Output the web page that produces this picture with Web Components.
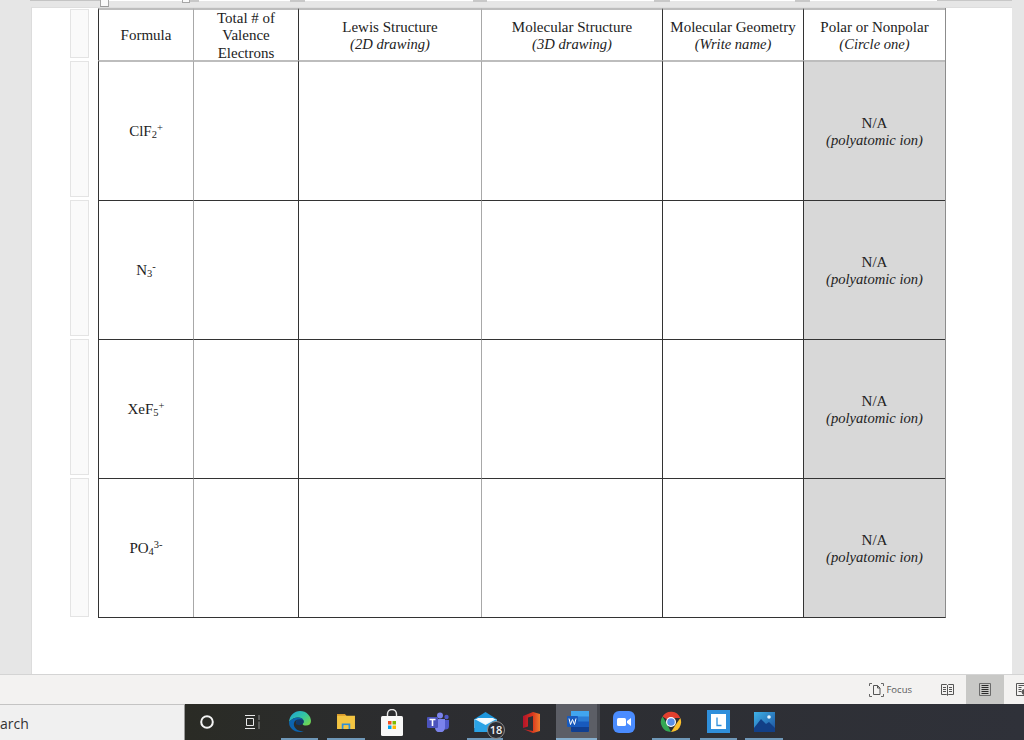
<!DOCTYPE html>
<html>
<head>
<meta charset="utf-8">
<title>Word document</title>
<style>
  html, body { margin: 0; height: 100%; overflow: hidden; }
  body { font-family: "Liberation Sans", sans-serif; }
  word-window { height: 740px; }
</style>
</head>
<body>
<word-window>
  <ruler-strip slot="ruler"></ruler-strip>
  <doc-page slot="page">
    <row-marks slot="marks"></row-marks>
    <chem-table slot="table"></chem-table>
  </doc-page>
  <status-bar slot="status"></status-bar>
  <task-bar slot="taskbar"></task-bar>
</word-window>

<script>
// Outer frame: grey workspace, status bar and taskbar stacked in a column.
customElements.define('word-window', class extends HTMLElement {
  constructor () {
    super()
    this.attachShadow({ mode: 'open' }).innerHTML = `
      <style>
        :host { display: flex; flex-direction: column; width: 1024px; background: #e6e6e6; }
        #work { flex: 1; display: flex; flex-direction: column; min-height: 0; }
      </style>
      <div id="work">
        <slot name="ruler"></slot>
        <slot name="page"></slot>
      </div>
      <slot name="status"></slot>
      <slot name="taskbar"></slot>`
  }
})

// The ruler pieces cut off at the top edge: [left, right, colour, height]
customElements.define('ruler-strip', class extends HTMLElement {
  constructor () {
    super()
    const parts = [
      [30, 100, '#c4c4c4', 1], [108, 182, '#fff', 1], [190, 199, '#c8c8c8', 2], [199, 290, '#fff', 1],
      [290, 305, '#c8c8c8', 2], [305, 473, '#fff', 1], [473, 487, '#c8c8c8', 2], [487, 654, '#fff', 1],
      [654, 670, '#c8c8c8', 2], [670, 795, '#fff', 1], [795, 810, '#c8c8c8', 2], [810, 937, '#fff', 1],
      [937, 1012, '#c8c8c8', 1]
    ]
    let html = ''
    let x = 0
    for (const [left, right, colour, height] of parts) {
      html += `<i style="margin-left:${left - x}px;width:${right - left}px;background:${colour};height:${height}px"></i>`
      x = right
    }
    this.attachShadow({ mode: 'open' }).innerHTML = `
      <style>
        :host { display: flex; height: 7px; align-items: flex-start; position: relative; }
        i { display: block; flex: none; }
        b { position: absolute; top: 0; box-sizing: border-box; background: #fafafa; border: 1px solid #a6a6a6; border-top: 0; }
      </style>
      ${html}
      <b style="left:100px;width:9px;height:7px;border-bottom-color:#999"></b>
      <b style="left:182px;width:8px;height:3px"></b>`
  }
})

// White sheet of paper.
customElements.define('doc-page', class extends HTMLElement {
  constructor () {
    super()
    this.attachShadow({ mode: 'open' }).innerHTML = `
      <style>
        :host { display: flex; flex: 1; margin: 0 12px 0 31px; padding: 0 0 0 38px; background: #fff; border-left: 1px solid #dcdcdc; border-top: 1px solid #dedede; gap: 9px; align-items: flex-start; }
      </style>
      <slot name="marks"></slot>
      <slot name="table"></slot>`
  }
})

// Pale row selectors to the left of the table.
customElements.define('row-marks', class extends HTMLElement {
  constructor () {
    super()
    const heights = [49, 136, 136, 136, 139]
    this.attachShadow({ mode: 'open' }).innerHTML = `
      <style>
        :host { display: flex; flex-direction: column; gap: 3px; width: 19px; padding-top: 1px; }
        div { box-sizing: border-box; background: #fafafa; border: 1px solid #e4e4e4; }
      </style>
      ${heights.map(h => `<div style="height:${h}px"></div>`).join('')}`
  }
})

customElements.define('chem-table', class extends HTMLElement {
  constructor () {
    super()
    const head = [
      ['Formula'],
      ['Total # of', 'Valence', 'Electrons'],
      ['Lewis Structure', '<em>(2D drawing)</em>'],
      ['Molecular Structure', '<em>(3D drawing)</em>'],
      ['Molecular Geometry', '<em>(Write name)</em>'],
      ['Polar or Nonpolar', '<em>(Circle one)</em>']
    ]
    const rows = [
      'ClF<sub>2</sub><sup>+</sup>',
      'N<sub>3</sub><sup>-</sup>',
      'XeF<sub>5</sub><sup>+</sup>',
      'PO<sub>4</sub><sup>3-</sup>'
    ]
    let cells = head.map(lines => `<div class="c h"><p>${lines.join('<br>')}</p></div>`).join('')
    for (const f of rows) {
      cells += `<div class="c"><p class="f">${f}</p></div>`
      cells += '<div class="c"></div><div class="c"></div><div class="c"></div><div class="c"></div>'
      cells += '<div class="c na"><p>N/A<br><em>(polyatomic ion)</em></p></div>'
    }
    this.attachShadow({ mode: 'open' }).innerHTML = `
      <style>
        :host { display: block; font-family: "Liberation Serif", serif; color: #222; font-size: 15px; line-height: 17.500px; }
        #grid {
          display: grid; width: 848px; box-sizing: border-box;
          grid-template-columns: 95px 105px 183px 181px 141px 142px;
          grid-template-rows: 52px 140px repeat(3, 139px);
          border-right: 1px solid #8c8c8c; border-bottom: 1px solid #333;
        }
        .c {
          box-sizing: border-box; display: flex; align-items: center; justify-content: center; text-align: center;
          border-left: 1px solid #333; border-top: 1px solid #333;
        }
        .c:nth-child(6n+2), .c:nth-child(6n+4) { border-left-color: #a8a8a8; }
        .h { border-top: 2px solid #bdbdbd; padding-top: 2px; }
        .c:nth-child(n+7):nth-child(-n+12) { border-top: 2px solid #bdbdbd; }
        p { margin: 0; white-space: nowrap; }
        em { font-size: 14.600px; }
        .f { margin-top: 2px; }
        sub, sup { font-size: 10.500px; line-height: 0; }
        sub { vertical-align: -2px; }
        sup { vertical-align: 5px; }
        .na { background: #d8d8d8; }
        .na p { margin-top: 2px; }
      </style>
      <div id="grid">${cells}</div>`
  }
})

// Word status bar with the view buttons.
customElements.define('status-bar', class extends HTMLElement {
  constructor () {
    super()
    this.attachShadow({ mode: 'open' }).innerHTML = `
      <style>
        :host { display: flex; height: 30px; flex: none; box-sizing: border-box; background: #f3f2f1; border-top: 1px solid #d4d4d4; align-items: stretch; justify-content: flex-end; color: #5a5a5a; font: 9.500px "Open Sans", sans-serif; overflow: hidden; }
        .focus { display: flex; align-items: center; gap: 2px; margin-right: 16px; }
        .v { width: 38px; display: flex; align-items: center; justify-content: center; flex: none; }
        .on { background: #c8c8c6; }
        .last { width: 20px; justify-content: flex-start; overflow: hidden; }
        svg { display: block; fill: none; stroke: #555; stroke-width: 1; }
      </style>
      <div class="focus">
        <svg width="15" height="14" viewBox="0 0 15 14"><path d="M.5 3V.5H3M12 .5h2.500V3M14.500 11v2.500H12M3 13.500H.5V11" stroke="#666"/><path d="M4.500 2.500h4l2.500 2.500v6.500h-6.500zM8.500 2.500v2.500h2.500"/></svg>
        <span>Focus</span>
      </div>
      <div class="v"><svg width="13" height="13" viewBox="0 0 13 13"><path d="M.5 1.500h5l1 1 1-1h5v10h-5l-1 1-1-1h-5zM6.500 2.500v9.500M2 4.500h3M2 6.500h3M2 8.500h3M8 4.500h3M8 6.500h3M8 8.500h3"/></svg></div>
      <div class="v on"><svg width="12" height="13" viewBox="0 0 12 13"><path d="M.5.5h11v12H.5z" stroke="#6a6a6a"/><path d="M2.500 2.500h7M2.500 4.500h7M2.500 6.500h7M2.500 8.500h7M2.500 10.500h7" stroke="#2a2a2a"/></svg></div>
      <div class="v last"><svg width="13" height="13" viewBox="0 0 13 13" style="flex:none;margin-left:12px"><path d="M.5.5h11v12H.5zM2.500 2.500h7M2.500 4.500h3M2.500 6.500h3M2.500 8.500h3"/><circle cx="8.500" cy="9" r="2.500" fill="#555"/></svg></div>`
  }
})

// Windows taskbar: search box then pinned icons with run markers.
customElements.define('task-bar', class extends HTMLElement {
  constructor () {
    super()
    const icon = (x, width, svg, cls = '') => `<span class="i ${cls}" style="left:${x}px;width:${width}px">${svg}</span>`
    this.attachShadow({ mode: 'open' }).innerHTML = `
      <style>
        :host { display: flex; height: 36px; flex: none; background: linear-gradient(90deg, #2a2b25 0 18%, #2c2d30 40%, #2f3139 100%); }
        #search { width: 185px; flex: none; box-sizing: border-box; background: #f0f0f0; border-top: 1px solid #c4c4c4; border-right: 1px solid #9a9a9a; color: #333; font: 14px/38px "Open Sans", sans-serif; }
        #icons { position: relative; flex: 1; margin-left: -1px; }
        .i { position: absolute; top: 0; height: 36px; display: flex; align-items: center; justify-content: center; }
        .run, .act { box-sizing: border-box; padding-top: 1px; border-bottom: 2px solid #6f98b8; }
        .act { background: #5c5e66; border-bottom-color: #86aecd; padding-right: 0; padding-left: 3px; }
        .badge { position: absolute; left: 303px; top: 17px; width: 18px; height: 18px; box-sizing: border-box; border-radius: 50%; background: #2c2d33; border: 1px solid #8e8e8e; color: #f2f2f2; font: 600 11px/16px "Open Sans", sans-serif; text-align: center; }
        .sep { position: absolute; left: 413px; top: 0; width: 3px; height: 36px; background: #45474e; }
        svg { display: block; }
      </style>
      <div id="search">arch</div>
      <div id="icons">
        ${icon(11, 24, '<svg width="14" height="14" viewBox="0 0 14 14"><circle cx="7" cy="7" r="5.800" fill="none" stroke="#f4f4f4" stroke-width="2"/></svg>')}
        ${icon(57, 22, '<svg width="15" height="14" viewBox="0 0 15 14" fill="none" stroke="#e8e8e8"><path d="M0 .5h10M0 13.500h10M1.500 3.500h7v7h-7z"/><path d="M14 0v5M14 6.500v7.500" stroke="#8a8a8a"/></svg>')}
        ${icon(97, 37, '<svg width="24" height="24" viewBox="0 0 24 24"><defs><linearGradient id="e" x1="0" y1="0" x2="1" y2=".8"><stop offset="0" stop-color="#1e9ed8"/><stop offset=".55" stop-color="#32c6a4"/><stop offset="1" stop-color="#72d64f"/></linearGradient></defs><path d="M1 12C1.500 5 6.500 1 12 1c6.500 0 11 5 11 10 0 3-2 4.500-5 4.500-2 0-3-.5-3.500-1.500 1.500-1.500 1.500-4-.5-5.500C11 6.500 5 7 1 12z" fill="url(#e)"/><path d="M1 12c4-5 10-5.500 13-3.500 2 1.500 2 4 .5 5.500H8c-.5-2 .5-4 2-4.500-3 .5-4.500 3-4 6 .8 4 6 6.500 10.500 5.500-1.500.7-3 1-4.500 1C5.500 22 .8 17.500 1 12z" fill="#0c63ad"/><path d="M14.500 14c-1.500 1.500-5 1.500-6.500 0-.5-2 .5-4 2-4.500 2-.6 4-.5 5 .5 1 1 1 2.700-.5 4z" fill="#123a6a"/></svg>', 'run')}
        ${icon(143, 38, '<svg width="20" height="17" viewBox="0 0 21 18"><path d="M1 1h8l2 2h9v14H1z" fill="#f4c542"/><path d="M1 1h8l2 2H1z" fill="#d99a2b"/><path d="M6 11h9v6h-2v-4H8v4H6z" fill="#2f8fd8"/><path d="M8 13h5v4H8z" fill="#f4c542"/></svg>', 'run')}
        ${icon(189, 38, '<svg width="22" height="27" viewBox="0 0 22 27"><path d="M6.500 9V4a4.500 4.500 0 0 1 9 0v5" fill="none" stroke="#e8e8e8" stroke-width="1.400" transform="translate(0 1)"/><rect x="0" y="7" width="22" height="20" rx="1.500" fill="#f8f8f8"/><path d="M7 12h3.500v3.500H7z" fill="#f25022"/><path d="M11.500 12H15v3.500h-3.500z" fill="#7fba00"/><path d="M7 16.500h3.500V20H7z" fill="#00a4ef"/><path d="M11.500 16.500H15V20h-3.500z" fill="#ffb900"/></svg>')}
        ${icon(236, 36, '<svg width="23" height="20" viewBox="0 0 23 20"><circle cx="13" cy="3.500" r="3" fill="#7b83eb"/><circle cx="19.500" cy="5" r="2.200" fill="#5059c9"/><path d="M15 8h7v6a3.500 3.500 0 0 1-7 0z" fill="#5059c9"/><path d="M7 7h11v8a5 5 0 0 1-10 1z" fill="#7b83eb"/><rect x="0" y="5" width="11" height="11" rx="1" fill="#4b53bc"/><path d="M2.500 7.500h6M5.500 7.500v6.500" stroke="#fff" stroke-width="1.600"/></svg>')}
        ${icon(283, 36, '<svg width="23" height="20" viewBox="0 0 22 20"><path d="M0 7 11 0l11 7v13H0z" fill="#1e96dc"/><path d="M0 7h22v9H0z" fill="#e9f6fd"/><path d="M0 7l11 6 11-6v13H0z" fill="#2aa3e6"/><path d="M2 6h18l-9 6z" fill="#f4fbff"/></svg>', 'run')}
        <span class="badge">18</span>
        ${icon(329, 36, '<svg width="17" height="21" viewBox="0 0 17 21"><defs><linearGradient id="o" x1="0" y1="0" x2="1" y2="0"><stop offset="0" stop-color="#b3132b"/><stop offset=".55" stop-color="#d8351d"/><stop offset="1" stop-color="#ef7b2d"/></linearGradient></defs><path d="M0 4 10 0l7 2v17l-7 2-10-4 10 2V4L5 5.500v9L0 16z" fill="url(#o)"/></svg>')}
        ${icon(372, 41, '<svg width="22" height="21" viewBox="0 0 22 21"><rect x="4" y="0" width="18" height="21" rx="1" fill="#2b7cd3"/><path d="M4 0h18v5.500H4z" fill="#41a5ee"/><path d="M4 10.500h18V16H4z" fill="#185abd"/><path d="M4 16h18v4a1 1 0 0 1-1 1H5a1 1 0 0 1-1-1z" fill="#103f91"/><rect x="0" y="5" width="11" height="11" rx="1" fill="#185abd"/><path d="M2 7.500l1.500 6 2-5 2 5 1.500-6" fill="none" stroke="#fff" stroke-width="1"/></svg>', 'act')}
        <span class="sep"></span>
        ${icon(422, 36, '<svg width="22" height="22" viewBox="0 0 22 22"><rect width="22" height="22" rx="6" fill="#4a8cff"/><rect x="4" y="7" width="9" height="8" rx="1.500" fill="#fff"/><path d="M14 10l4-3v8l-4-3z" fill="#fff"/></svg>')}
        ${icon(468, 38, '<svg width="22" height="22" viewBox="0 0 22 22"><path d="M11 11 2.500 5.500A10 10 0 0 1 20.300 7H11z" fill="#e2402f"/><path d="M11 21A10 10 0 0 1 2.500 5.500L7 13z" fill="#34a853"/><path d="M20.300 7A10 10 0 0 1 11 21l4.500-7z" fill="#fbc02d"/><circle cx="11" cy="11" r="5" fill="#fff"/><circle cx="11" cy="11" r="3.800" fill="#5a8fe6"/></svg>', 'run')}
        ${icon(516, 37, '<svg width="23" height="23" viewBox="0 0 23 23"><rect width="23" height="23" fill="#2f8fdb"/><rect x="4" y="4" width="15" height="15" fill="#fff"/><path d="M10 7.500v8h4.500" fill="none" stroke="#2f8fdb" stroke-width="1.300"/></svg>', 'run')}
        ${icon(561, 38, '<svg width="21" height="20" viewBox="0 0 21 20"><defs><linearGradient id="p" x1="0" y1="0" x2="1" y2="1"><stop offset="0" stop-color="#3fb2e8"/><stop offset="1" stop-color="#1c4f9c"/></linearGradient></defs><rect width="21" height="20" fill="url(#p)"/><path d="M0 16 7 7l5 5 3-2 6 6v4H0z" fill="#123f86"/><circle cx="15" cy="5" r="1.800" fill="#e8f6ff"/></svg>', 'run')}
      </div>`
  }
})
</script>
</body>
</html>
